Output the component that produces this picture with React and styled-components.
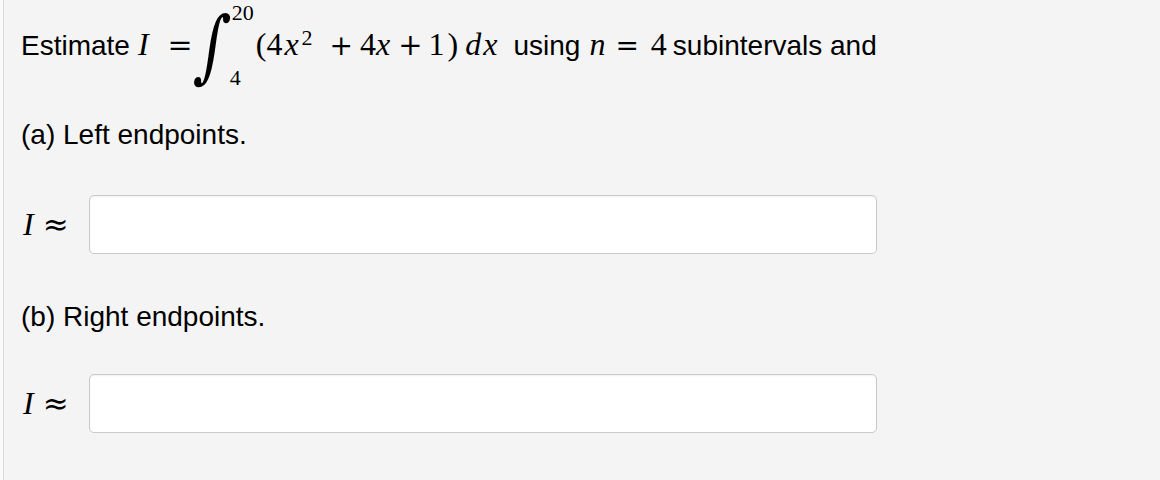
import React from 'react';
import styled, { createGlobalStyle } from 'styled-components';

const GlobalStyle = createGlobalStyle`
  html, body {
    margin: 0;
    padding: 0;
    background: #fafafa;
  }
  body {
    font-family: "Liberation Sans", Arial, Helvetica, sans-serif;
    color: #000;
  }
`;

const Panel = styled.div`
  margin-left: 3px;
  border-left: 1px solid #dcdcdc;
  background: #f4f4f4;
  min-height: 480px;
  box-sizing: border-box;
  padding: 0 0 0 17px;
`;

const Statement = styled.div`
  padding-top: 8px;
  font-size: 28px;
  line-height: 1;
  white-space: nowrap;
`;

const Word = styled.span`
  margin: 0 ${({ mr }) => mr ?? 0}px 0 ${({ ml }) => ml ?? 0}px;
`;

const Math = styled.span`
  font-family: "Liberation Serif", "Times New Roman", serif;
  font-size: 32px;
  white-space: pre;
  margin-left: ${({ ml }) => ml ?? 0}px;
`;

const Num = styled.span`
  margin: 0 ${({ mr }) => mr ?? 0}px 0 ${({ ml }) => ml ?? 0}px;
`;

const Var = styled.i`
  font-family: "Liberation Serif", "Times New Roman", serif;
  font-style: italic;
  margin: 0 ${({ mr }) => mr ?? 0}px 0 ${({ ml }) => ml ?? 0}px;
`;

const Op = styled.span`
  font-family: "DejaVu Serif", serif;
  font-size: ${({ size }) => size ?? 28}px;
  margin: 0 ${({ mr }) => mr ?? 8}px 0 ${({ ml }) => ml ?? 8}px;
`;

const Integral = styled.span`
  display: inline-flex;
  align-items: stretch;
  vertical-align: middle;
  height: 80px;
`;

const IntSign = styled.span`
  font-family: "DejaVu Serif", serif;
  font-size: 60px;
  line-height: 80px;
  width: 29px;
  display: inline-block;
  transform: translate(-4px, -3px) scaleY(1.32) skewX(-9deg);
`;

const Limits = styled.span`
  display: flex;
  flex-direction: column;
  justify-content: space-between;
  font-family: "Liberation Serif", "Times New Roman", serif;
  font-size: 22px;
  line-height: 1;
  margin: -6px 0 -1px;
`;

const Lim = styled.span`
  margin-left: ${({ shift }) => shift}px;
`;

const Sup = styled.sup`
  font-size: 22px;
  vertical-align: 10px;
  line-height: 0;
`;

const PartLabel = styled.div`
  font-size: 28px;
  line-height: 1;
  margin-top: ${({ top }) => top}px;
`;

const AnswerRow = styled.div`
  display: flex;
  align-items: center;
  margin-top: ${({ top }) => top}px;
`;

const ApproxLabel = styled.span`
  font-family: "Liberation Serif", "Times New Roman", serif;
  font-size: 32px;
  width: 66px;
  padding-left: 2px;
  white-space: pre;
`;

const AnswerInput = styled.input`
  width: 788px;
  height: 59px;
  box-sizing: border-box;
  border: 1px solid #c9c9c9;
  border-radius: 5px;
  background: #fff;
  box-shadow: inset 0 1px 2px rgba(0, 0, 0, 0.06);
  font-size: 20px;
  padding: 0 10px;
  outline: none;
`;

function Answer({ top }) {
  return (
    <AnswerRow top={top}>
      <ApproxLabel>
        <Var mr={2}>I</Var>
        <Op size={31} ml={7} mr={0}>≈</Op>
      </ApproxLabel>
      <AnswerInput type="text" />
    </AnswerRow>
  );
}

export default function App() {
  return (
    <>
      <GlobalStyle />
      <Panel>
        <Statement>
          Estimate
          <Math ml={8}>
            <Var mr={5}>I</Var>
            <Op size={30} ml={14} mr={8}>=</Op>
          </Math>
          <Integral>
            <IntSign>∫</IntSign>
            <Limits>
              <Lim shift={2}>20</Lim>
              <Lim shift={0}>4</Lim>
            </Limits>
          </Integral>
          <Math ml={2}>
            (<Num mr={2}>4</Num>
            <Var mr={3}>x</Var>
            <Sup>2</Sup>
            <Op ml={17} mr={7}>+</Op>4<Var mr={5}>x</Var>
            <Op size={29} ml={3} mr={6}>+</Op>
            <Num mr={3}>1</Num>)
            <Var ml={7} mr={2}>d</Var>
            <Var mr={4}>x</Var>
          </Math>
          <Word ml={12} mr={9}>using</Word>
          <Math>
            <Var mr={2}>n</Var>
            <Op ml={8} mr={12}>=</Op>4
          </Math>
          <Word ml={6}>subintervals and</Word>
        </Statement>
        <PartLabel top={33}>(a) Left endpoints.</PartLabel>
        <Answer top={46} />
        <PartLabel top={49}>(b) Right endpoints.</PartLabel>
        <Answer top={43} />
      </Panel>
    </>
  );
}
